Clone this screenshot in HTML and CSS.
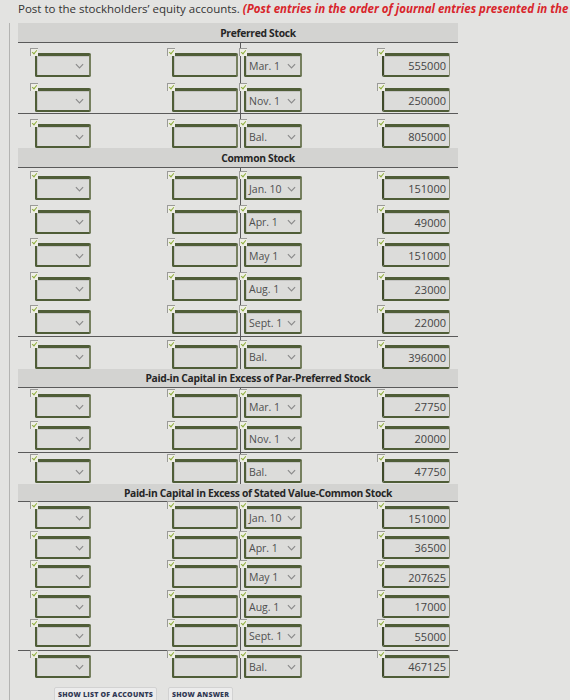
FILE: index.html
```html
<!DOCTYPE html>
<html>
<head>
<meta charset="utf-8">
<link rel="stylesheet" href="styles.css">
</head>
<body>
<div class="page">
  <p class="intro">Post to the stockholders’ equity accounts. <em>(Post entries in the order of journal entries presented in the problem.)</em></p>
  <div class="panel">

    <section class="acct s1">
      <h2 class="head">Preferred Stock</h2>
      <div class="row">
        <div class="half left">
          <div class="fld sel"><span class="mk"></span><svg class="chev" viewBox="0 0 10 6"><polyline points="1,1 5,5 9,1"/></svg></div>
          <div class="fld inp"><span class="mk"></span></div>
        </div>
        <div class="half right">
          <div class="fld sel date"><span class="mk"></span><span class="val">Mar. 1</span><svg class="chev" viewBox="0 0 10 6"><polyline points="1,1 5,5 9,1"/></svg></div>
          <div class="fld amt"><span class="mk"></span>555000</div>
        </div>
      </div>
      <div class="row">
        <div class="half left">
          <div class="fld sel"><span class="mk"></span><svg class="chev" viewBox="0 0 10 6"><polyline points="1,1 5,5 9,1"/></svg></div>
          <div class="fld inp"><span class="mk"></span></div>
        </div>
        <div class="half right">
          <div class="fld sel date"><span class="mk"></span><span class="val">Nov. 1</span><svg class="chev" viewBox="0 0 10 6"><polyline points="1,1 5,5 9,1"/></svg></div>
          <div class="fld amt"><span class="mk"></span>250000</div>
        </div>
      </div>
      <div class="row bal">
        <div class="half left">
          <div class="fld sel"><span class="mk"></span><svg class="chev" viewBox="0 0 10 6"><polyline points="1,1 5,5 9,1"/></svg></div>
          <div class="fld inp"><span class="mk"></span></div>
        </div>
        <div class="half right">
          <div class="fld sel date"><span class="mk"></span><span class="val">Bal.</span><svg class="chev" viewBox="0 0 10 6"><polyline points="1,1 5,5 9,1"/></svg></div>
          <div class="fld amt"><span class="mk"></span>805000</div>
        </div>
      </div>
    </section>

    <section class="acct s2">
      <h2 class="head">Common Stock</h2>
      <div class="row">
        <div class="half left">
          <div class="fld sel"><span class="mk"></span><svg class="chev" viewBox="0 0 10 6"><polyline points="1,1 5,5 9,1"/></svg></div>
          <div class="fld inp"><span class="mk"></span></div>
        </div>
        <div class="half right">
          <div class="fld sel date"><span class="mk"></span><span class="val">Jan. 10</span><svg class="chev" viewBox="0 0 10 6"><polyline points="1,1 5,5 9,1"/></svg></div>
          <div class="fld amt"><span class="mk"></span>151000</div>
        </div>
      </div>
      <div class="row">
        <div class="half left">
          <div class="fld sel"><span class="mk"></span><svg class="chev" viewBox="0 0 10 6"><polyline points="1,1 5,5 9,1"/></svg></div>
          <div class="fld inp"><span class="mk"></span></div>
        </div>
        <div class="half right">
          <div class="fld sel date"><span class="mk"></span><span class="val">Apr. 1</span><svg class="chev" viewBox="0 0 10 6"><polyline points="1,1 5,5 9,1"/></svg></div>
          <div class="fld amt"><span class="mk"></span>49000</div>
        </div>
      </div>
      <div class="row">
        <div class="half left">
          <div class="fld sel"><span class="mk"></span><svg class="chev" viewBox="0 0 10 6"><polyline points="1,1 5,5 9,1"/></svg></div>
          <div class="fld inp"><span class="mk"></span></div>
        </div>
        <div class="half right">
          <div class="fld sel date"><span class="mk"></span><span class="val">May 1</span><svg class="chev" viewBox="0 0 10 6"><polyline points="1,1 5,5 9,1"/></svg></div>
          <div class="fld amt"><span class="mk"></span>151000</div>
        </div>
      </div>
      <div class="row">
        <div class="half left">
          <div class="fld sel"><span class="mk"></span><svg class="chev" viewBox="0 0 10 6"><polyline points="1,1 5,5 9,1"/></svg></div>
          <div class="fld inp"><span class="mk"></span></div>
        </div>
        <div class="half right">
          <div class="fld sel date"><span class="mk"></span><span class="val">Aug. 1</span><svg class="chev" viewBox="0 0 10 6"><polyline points="1,1 5,5 9,1"/></svg></div>
          <div class="fld amt"><span class="mk"></span>23000</div>
        </div>
      </div>
      <div class="row">
        <div class="half left">
          <div class="fld sel"><span class="mk"></span><svg class="chev" viewBox="0 0 10 6"><polyline points="1,1 5,5 9,1"/></svg></div>
          <div class="fld inp"><span class="mk"></span></div>
        </div>
        <div class="half right">
          <div class="fld sel date"><span class="mk"></span><span class="val">Sept. 1</span><svg class="chev" viewBox="0 0 10 6"><polyline points="1,1 5,5 9,1"/></svg></div>
          <div class="fld amt"><span class="mk"></span>22000</div>
        </div>
      </div>
      <div class="row bal">
        <div class="half left">
          <div class="fld sel"><span class="mk"></span><svg class="chev" viewBox="0 0 10 6"><polyline points="1,1 5,5 9,1"/></svg></div>
          <div class="fld inp"><span class="mk"></span></div>
        </div>
        <div class="half right">
          <div class="fld sel date"><span class="mk"></span><span class="val">Bal.</span><svg class="chev" viewBox="0 0 10 6"><polyline points="1,1 5,5 9,1"/></svg></div>
          <div class="fld amt"><span class="mk"></span>396000</div>
        </div>
      </div>
    </section>

    <section class="acct s3">
      <h2 class="head">Paid-in Capital in Excess of Par-Preferred Stock</h2>
      <div class="row">
        <div class="half left">
          <div class="fld sel"><span class="mk"></span><svg class="chev" viewBox="0 0 10 6"><polyline points="1,1 5,5 9,1"/></svg></div>
          <div class="fld inp"><span class="mk"></span></div>
        </div>
        <div class="half right">
          <div class="fld sel date"><span class="mk"></span><span class="val">Mar. 1</span><svg class="chev" viewBox="0 0 10 6"><polyline points="1,1 5,5 9,1"/></svg></div>
          <div class="fld amt"><span class="mk"></span>27750</div>
        </div>
      </div>
      <div class="row">
        <div class="half left">
          <div class="fld sel"><span class="mk"></span><svg class="chev" viewBox="0 0 10 6"><polyline points="1,1 5,5 9,1"/></svg></div>
          <div class="fld inp"><span class="mk"></span></div>
        </div>
        <div class="half right">
          <div class="fld sel date"><span class="mk"></span><span class="val">Nov. 1</span><svg class="chev" viewBox="0 0 10 6"><polyline points="1,1 5,5 9,1"/></svg></div>
          <div class="fld amt"><span class="mk"></span>20000</div>
        </div>
      </div>
      <div class="row bal">
        <div class="half left">
          <div class="fld sel"><span class="mk"></span><svg class="chev" viewBox="0 0 10 6"><polyline points="1,1 5,5 9,1"/></svg></div>
          <div class="fld inp"><span class="mk"></span></div>
        </div>
        <div class="half right">
          <div class="fld sel date"><span class="mk"></span><span class="val">Bal.</span><svg class="chev" viewBox="0 0 10 6"><polyline points="1,1 5,5 9,1"/></svg></div>
          <div class="fld amt"><span class="mk"></span>47750</div>
        </div>
      </div>
    </section>

    <section class="acct s4">
      <h2 class="head">Paid-in Capital in Excess of Stated Value-Common Stock</h2>
      <div class="row">
        <div class="half left">
          <div class="fld sel"><span class="mk"></span><svg class="chev" viewBox="0 0 10 6"><polyline points="1,1 5,5 9,1"/></svg></div>
          <div class="fld inp"><span class="mk"></span></div>
        </div>
        <div class="half right">
          <div class="fld sel date"><span class="mk"></span><span class="val">Jan. 10</span><svg class="chev" viewBox="0 0 10 6"><polyline points="1,1 5,5 9,1"/></svg></div>
          <div class="fld amt"><span class="mk"></span>151000</div>
        </div>
      </div>
      <div class="row">
        <div class="half left">
          <div class="fld sel"><span class="mk"></span><svg class="chev" viewBox="0 0 10 6"><polyline points="1,1 5,5 9,1"/></svg></div>
          <div class="fld inp"><span class="mk"></span></div>
        </div>
        <div class="half right">
          <div class="fld sel date"><span class="mk"></span><span class="val">Apr. 1</span><svg class="chev" viewBox="0 0 10 6"><polyline points="1,1 5,5 9,1"/></svg></div>
          <div class="fld amt"><span class="mk"></span>36500</div>
        </div>
      </div>
      <div class="row">
        <div class="half left">
          <div class="fld sel"><span class="mk"></span><svg class="chev" viewBox="0 0 10 6"><polyline points="1,1 5,5 9,1"/></svg></div>
          <div class="fld inp"><span class="mk"></span></div>
        </div>
        <div class="half right">
          <div class="fld sel date"><span class="mk"></span><span class="val">May 1</span><svg class="chev" viewBox="0 0 10 6"><polyline points="1,1 5,5 9,1"/></svg></div>
          <div class="fld amt"><span class="mk"></span>207625</div>
        </div>
      </div>
      <div class="row">
        <div class="half left">
          <div class="fld sel"><span class="mk"></span><svg class="chev" viewBox="0 0 10 6"><polyline points="1,1 5,5 9,1"/></svg></div>
          <div class="fld inp"><span class="mk"></span></div>
        </div>
        <div class="half right">
          <div class="fld sel date"><span class="mk"></span><span class="val">Aug. 1</span><svg class="chev" viewBox="0 0 10 6"><polyline points="1,1 5,5 9,1"/></svg></div>
          <div class="fld amt"><span class="mk"></span>17000</div>
        </div>
      </div>
      <div class="row">
        <div class="half left">
          <div class="fld sel"><span class="mk"></span><svg class="chev" viewBox="0 0 10 6"><polyline points="1,1 5,5 9,1"/></svg></div>
          <div class="fld inp"><span class="mk"></span></div>
        </div>
        <div class="half right">
          <div class="fld sel date"><span class="mk"></span><span class="val">Sept. 1</span><svg class="chev" viewBox="0 0 10 6"><polyline points="1,1 5,5 9,1"/></svg></div>
          <div class="fld amt"><span class="mk"></span>55000</div>
        </div>
      </div>
      <div class="row bal">
        <div class="half left">
          <div class="fld sel"><span class="mk"></span><svg class="chev" viewBox="0 0 10 6"><polyline points="1,1 5,5 9,1"/></svg></div>
          <div class="fld inp"><span class="mk"></span></div>
        </div>
        <div class="half right">
          <div class="fld sel date"><span class="mk"></span><span class="val">Bal.</span><svg class="chev" viewBox="0 0 10 6"><polyline points="1,1 5,5 9,1"/></svg></div>
          <div class="fld amt"><span class="mk"></span>467125</div>
        </div>
      </div>
    </section>

    <div class="actions">
      <button class="btn">Show List of Accounts</button>
      <button class="btn">Show Answer</button>
    </div>
  </div>
</div>
</body>
</html>
```

FILE: styles.css
```css
html, body {
  margin: 0;
  padding: 0;
  height: 100%;
  overflow: hidden;
}
body {
  background: #e3e3e1;
  font-family: "Open Sans", "Liberation Sans", sans-serif;
  color: #3a3a3a;
}
.page {
  width: 570px;
  height: 700px;
  overflow: hidden;
}
.intro {
  margin: 0;
  padding: 2px 0 0 18px;
  height: 23px;
  box-sizing: border-box;
  font-size: 11.5px;
  line-height: 14px;
  white-space: nowrap;
  color: #333;
}
.intro em {
  color: #d8262c;
  font-weight: 700;
  font-style: italic;
}
.panel {
  margin-left: 9px;
  border-left: 1px solid #b4b4b2;
  padding-left: 8px;
  width: 450px;
}
.acct {
  width: 440px;
  --rh: 35px;
  --pt: 10px;
  --bh: 24px;
  --hh: 20px;
}
.acct.s2 { --rh: 33.5px; --pt: 8px; --bh: 24px; --hh: 20px; }
.acct.s3 { --rh: 32px; --pt: 6px; --bh: 24px; --hh: 19px; }
.acct.s4 { --rh: 29.5px; --pt: 4px; --bh: 23px; --hh: 18px; }

.head {
  margin: 0;
  height: var(--hh);
  line-height: var(--hh);
  background: #d3d3d1;
  border-bottom: 1px solid #5a5a5a;
  box-sizing: border-box;
  font-size: 10.3px;
  font-weight: 700;
  letter-spacing: -0.3px;
  text-align: center;
  padding-left: 40px;
  color: #262626;
}
.row {
  display: flex;
  height: var(--rh);
}
.row.bal {
  border-top: 1px solid #5a5a5a;
  height: calc(var(--rh) - 1px);
}
.half {
  display: flex;
  justify-content: space-between;
  align-items: flex-start;
  box-sizing: border-box;
  padding-top: var(--pt);
}
.half.left {
  width: 222px;
  padding-left: 17px;
  padding-right: 2px;
}
.half.right {
  width: 218px;
  border-left: 1px solid #5a5a5a;
  padding-left: 3px;
  padding-right: 8px;
}
.fld {
  position: relative;
  height: var(--bh);
  box-sizing: border-box;
  border: 2px solid #4f5d37;
  border-top-width: 3px;
  border-right-color: #76805f;
  border-radius: 2px;
  background: #dcdcda;
  box-shadow: inset 1px 1px 0 #c4c4c2;
  display: flex;
  align-items: center;
  font-size: 10.5px;
  color: #4f4f4f;
}
.fld.sel { width: 56px; justify-content: flex-end; padding-right: 5px; }
.fld.inp { width: 66px; }
.fld.date { width: 58px; justify-content: space-between; padding-left: 3px; padding-right: 4px; }
.fld.amt {
  width: 68px;
  justify-content: flex-end;
  padding-right: 3px;
  font-size: 11px;
  color: #444;
  border-left-color: #3f4a2a;
  border-right-width: 1px;
  border-right-color: #8c9078;
}
.chev {
  width: 9px;
  height: 6px;
  fill: none;
  stroke: #8b8b8b;
  stroke-width: 1.3;
}
.mk {
  position: absolute;
  left: -7px;
  top: -8px;
  width: 7px;
  height: 7px;
  border-top: 1px solid #9a9a98;
  border-left: 1px solid #9a9a98;
  background: #efefe6;
}
.mk::after {
  content: "";
  position: absolute;
  left: 2px;
  top: 0px;
  width: 2px;
  height: 4px;
  border-right: 1.3px solid #8fae3c;
  border-bottom: 1.3px solid #8fae3c;
  transform: rotate(40deg);
}
.actions {
  display: flex;
  gap: 11px;
  padding: 8px 0 0 36px;
}
.btn {
  font-family: "Open Sans", "Liberation Sans", sans-serif;
  font-size: 7px;
  font-weight: 800;
  text-transform: uppercase;
  letter-spacing: 0.2px;
  color: #323a55;
  background: #ececec;
  border: 1px solid #d2d2d2;
  border-radius: 2px;
  padding: 2px 3px;
  line-height: 10px;
}
```
